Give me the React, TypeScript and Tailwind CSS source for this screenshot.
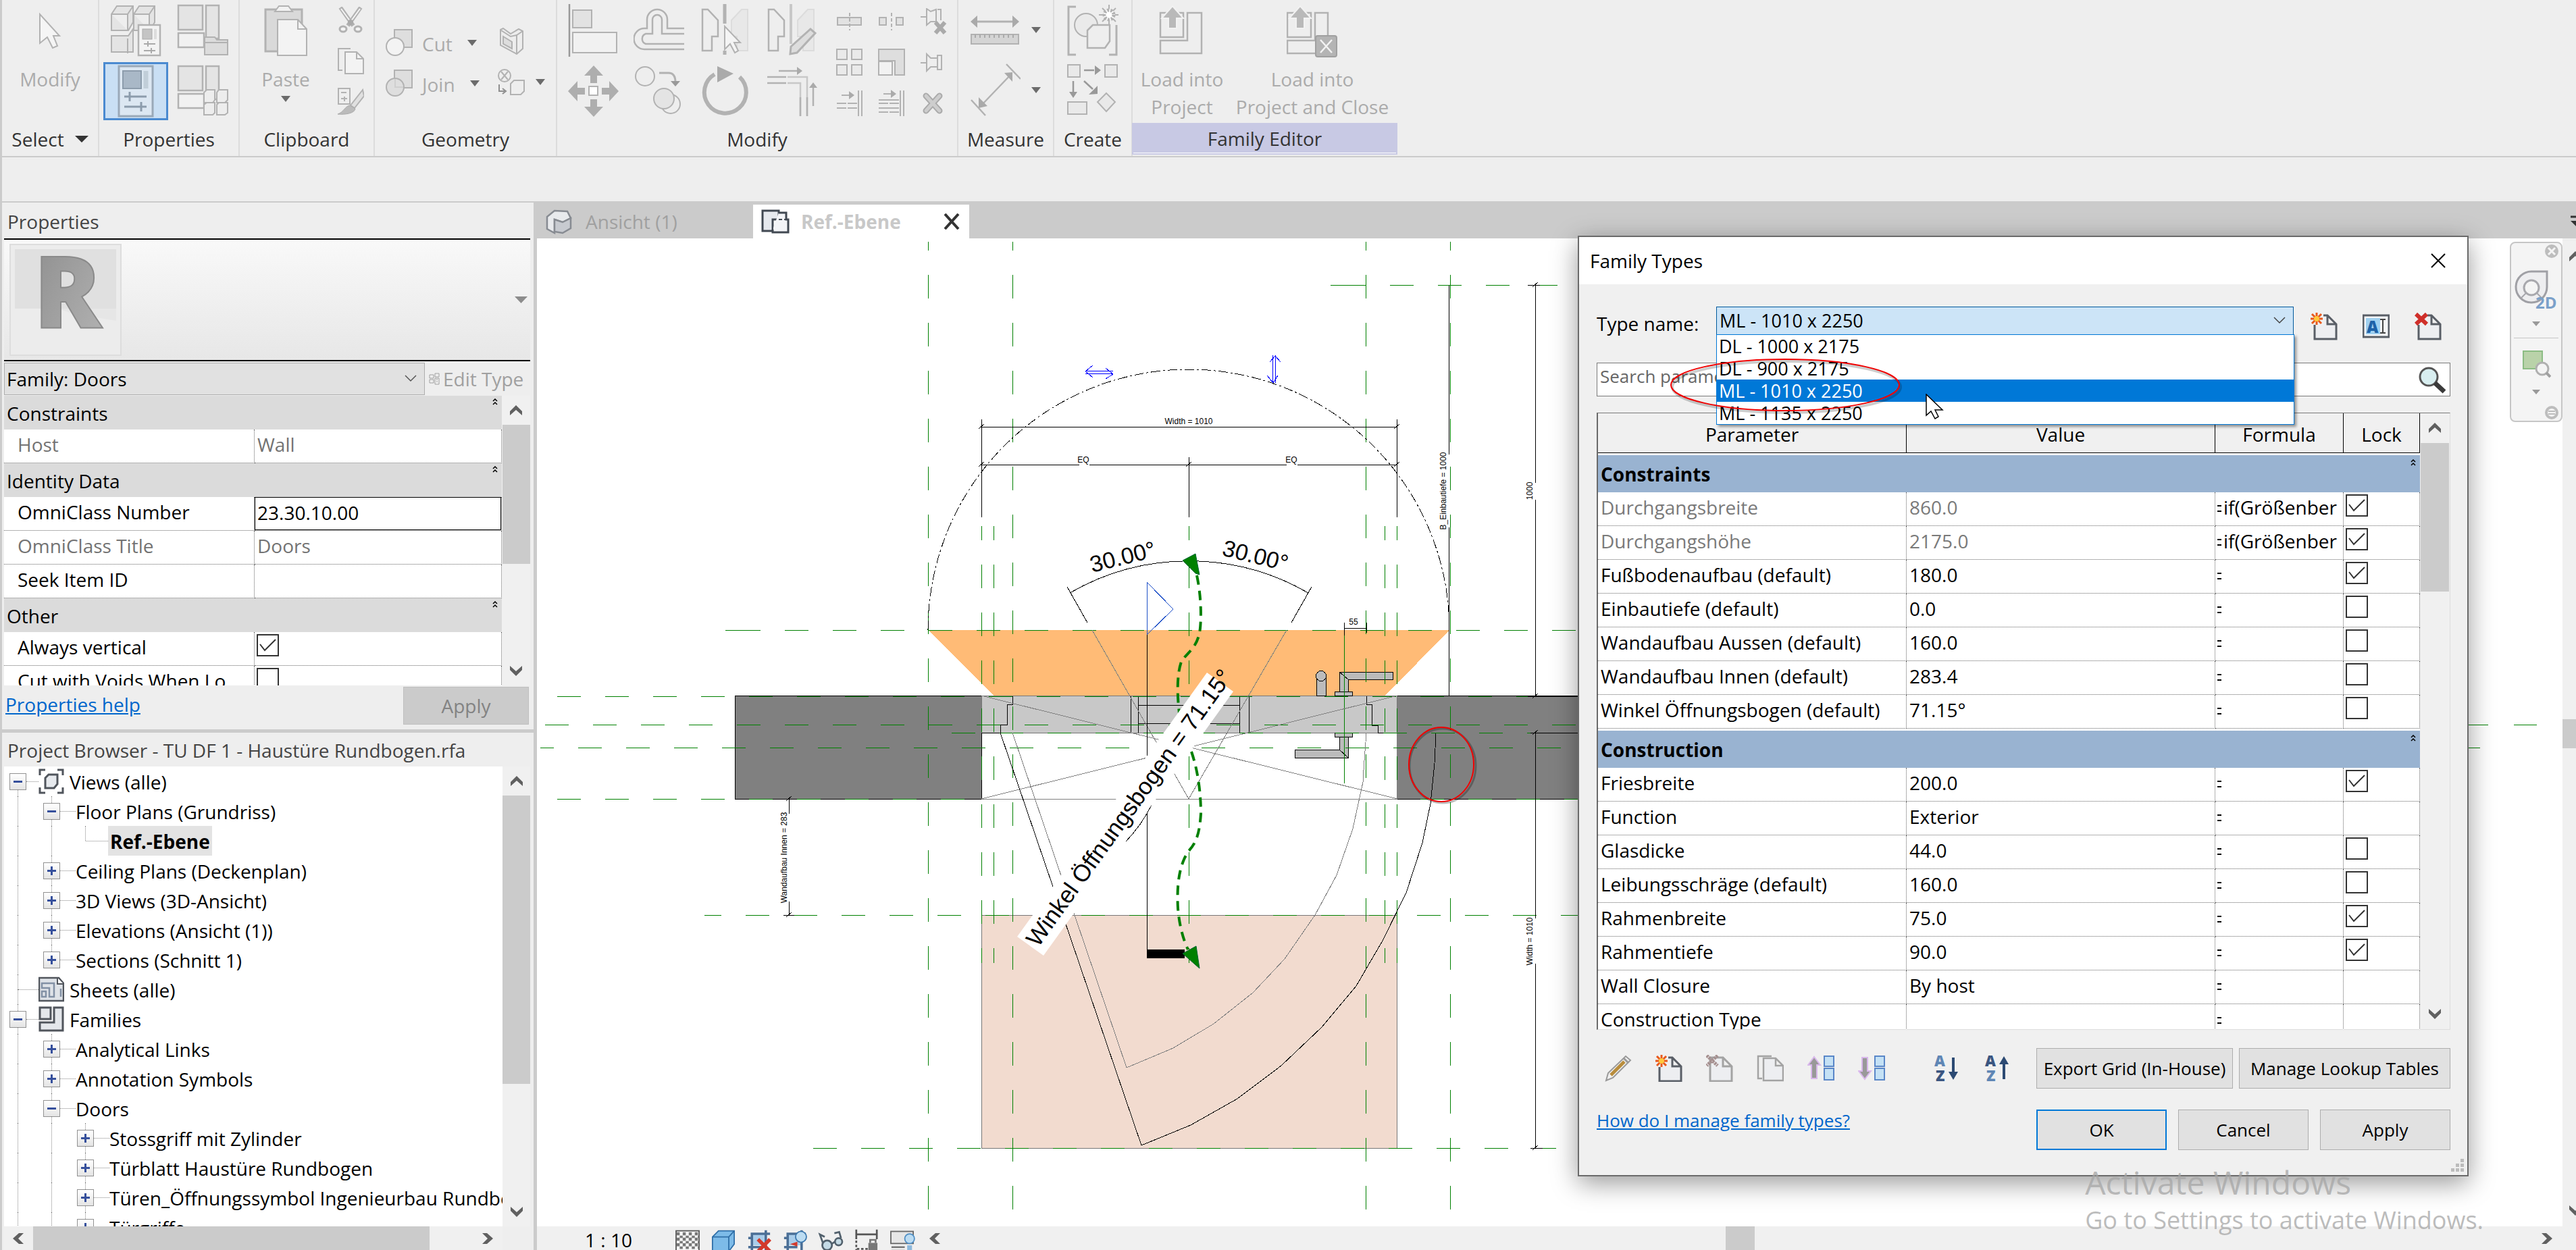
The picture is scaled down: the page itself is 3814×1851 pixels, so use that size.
import type { ReactNode } from 'react';

/* ---------- shared bits ---------- */

const G = '#b2b2b2';
const F = '#e4e4e4';

function Svg({ w, h, children, className = '' }: { w: number; h: number; children: ReactNode; className?: string }) {
  return (
    <svg width={w} height={h} viewBox={`0 0 ${w} ${h}`} className={`block shrink-0 ${className}`} aria-hidden="true">
      {children}
    </svg>
  );
}

function Caret({ color = '#6b6b6b', w = 14, h = 9 }: { color?: string; w?: number; h?: number }) {
  return (
    <Svg w={w} h={h}>
      <path d={`M0 0H${w}L${w / 2} ${h}Z`} fill={color} />
    </Svg>
  );
}

function Arrow({ dir }: { dir: 'up' | 'down' | 'left' | 'right' }) {
  const paths = {
    up: 'M1 16V10L10 1L19 10V16L10 8Z',
    down: 'M1 1V7L10 16L19 7V1L10 9Z',
    left: 'M17 1H10L1 9L10 17H17L9 9Z',
    right: 'M1 1H8L17 9L8 17H1L9 9Z',
  };
  return (
    <Svg w={20} h={18}>
      <path d={paths[dir]} fill="#606060" />
    </Svg>
  );
}

function CheckBox({ checked = false, label }: { checked?: boolean; label: string }) {
  return (
    <span className="grid size-[33px]">
      <input
        type="checkbox"
        defaultChecked={checked}
        aria-label={label}
        className="peer col-start-1 row-start-1 size-[33px] appearance-none border-2 border-[#333] bg-white"
      />
      <svg
        viewBox="0 0 33 33"
        className="pointer-events-none invisible col-start-1 row-start-1 size-[33px] peer-checked:visible"
        aria-hidden="true"
      >
        <path d="M5 15L12 24L28 8" fill="none" stroke="#333" strokeWidth="2" />
      </svg>
    </span>
  );
}

function Collapse() {
  return (
    <Svg w={8} h={10}>
      <path d="M1 4L4 1L7 4M1 9L4 6L7 9" fill="none" stroke="#000" strokeWidth="1.5" />
    </Svg>
  );
}

/* ---------- ribbon icons (76 x 80 and 40 x 40) ---------- */

function Cubes() {
  return (
    <g stroke={G} strokeWidth="2" fill={F}>
      <path d="M2 16L10 4H34V28L27 40H2Z" />
      <path d="M2 16H26V40M26 16L34 4" fill="#eee" />
      <path d="M35 16L43 4H66V28L59 40H35Z" />
      <path d="M35 16H58V40M58 16L66 4" fill="#eee" />
      <path d="M2 48H27L34 38V72H2Z" />
      <path d="M26 52V74" />
    </g>
  );
}

function Cabinet() {
  return (
    <g stroke={G} strokeWidth="2.5" fill={F}>
      <rect x="2" y="3" width="36" height="36" />
      <path d="M43 3H62V52H43Z" />
      <path d="M2 44H40V65H2Z" fill="#f1f1f1" />
    </g>
  );
}

function PropertiesIcon() {
  return (
    <Svg w={76} h={80}>
      <Cubes />
      <rect x="42" y="32" width="32" height="45" fill="#f3f3f3" stroke={G} strokeWidth="2.5" />
      <rect x="48" y="38" width="14" height="15" fill="#c4c4c4" stroke="#aaa" />
      <path d="M67 38V53" stroke="#ddd" strokeWidth="4" />
      <path d="M50 60H67M56 56V64M50 70H67M61 66V74" stroke="#aaa" strokeWidth="2" />
    </Svg>
  );
}

function FamilyCategoryIcon() {
  return (
    <Svg w={76} h={80}>
      <Cabinet />
      <path d="M41 76V50H56L59 54H75V76Z" fill="#dcdcdc" stroke={G} strokeWidth="2" />
      <path d="M41 58H75" stroke={G} strokeWidth="2" />
    </Svg>
  );
}

function TypePaletteIcon() {
  return (
    <Svg w={76} h={80}>
      <rect x="13" y="3" width="50" height="74" fill="#dce7f2" stroke="#9aa9b8" strokeWidth="3" />
      <rect x="19" y="10" width="27" height="26" fill="#a9b8c7" stroke="#8c9cac" strokeWidth="2" />
      <path d="M53 10V36" stroke="#c1ced9" strokeWidth="7" />
      <path d="M21 48H54M29 41V55M21 63H54M46 56V70" stroke="#8c9cac" strokeWidth="3" />
    </Svg>
  );
}

function FamilyTypesIcon() {
  return (
    <Svg w={76} h={80}>
      <Cabinet />
      <g fill="#ededed" stroke={G} strokeWidth="2">
        <path d="M40 42L44 38H56V53L53 57H40Z" />
        <path d="M59 42L62 38H75V53L71 57H59Z" />
        <path d="M40 60L44 57H56V72L53 75H40Z" />
        <path d="M59 60L62 57H75V72L71 75H59Z" />
      </g>
    </Svg>
  );
}

function PasteIcon() {
  return (
    <Svg w={76} h={80}>
      <rect x="8" y="9" width="54" height="62" fill="#d9d9d9" stroke={G} strokeWidth="3" />
      <path d="M22 12L28 4H42L48 12Z" fill="#f2f2f2" stroke={G} strokeWidth="2" />
      <path d="M26 24H56L69 38V77H26Z" fill="#f3f3f3" stroke={G} strokeWidth="2" />
      <path d="M56 24V38H69" fill="none" stroke={G} strokeWidth="2" />
    </Svg>
  );
}

function ScissorsIcon() {
  return (
    <Svg w={40} h={40}>
      <path d="M5 1L24 28M35 1L16 28" stroke={G} strokeWidth="6" />
      <path d="M6 3L22 25M34 3L18 25" stroke="#f4f4f4" strokeWidth="2" />
      <circle cx="20" cy="23" r="4" fill="#aaa" />
      <ellipse cx="9" cy="33" rx="5" ry="4" fill="#f4f4f4" stroke={G} strokeWidth="3" />
      <ellipse cx="31" cy="33" rx="5" ry="4" fill="#f4f4f4" stroke={G} strokeWidth="3" />
    </Svg>
  );
}

function CopyIcon() {
  return (
    <Svg w={40} h={40}>
      <path d="M8 34H2V2H20" fill="none" stroke={G} strokeWidth="2" />
      <path d="M12 7H29L39 17V39H12Z" fill="#f3f3f3" stroke={G} strokeWidth="2" />
      <path d="M29 7V17H39" fill="none" stroke={G} strokeWidth="2" />
    </Svg>
  );
}

function BrushIcon() {
  return (
    <Svg w={40} h={40}>
      <rect x="2" y="1" width="17" height="23" fill="#eee" stroke={G} strokeWidth="2" />
      <path d="M6 7H14M6 16H15M11 13V20" stroke={G} strokeWidth="2" />
      <path d="M38 3L20 26L26 30L40 12Z" fill="#e0e0e0" stroke={G} strokeWidth="2" />
      <path d="M19 26L27 31C26 38 12 40 1 39C10 36 12 27 19 26Z" fill="#bbb" stroke="#aaa" />
    </Svg>
  );
}

function CutGeometryIcon() {
  return (
    <Svg w={40} h={40}>
      <rect x="13" y="1" width="26" height="26" fill="#dedede" stroke={G} strokeWidth="2" />
      <circle cx="14" cy="26" r="13" fill="#f3f3f3" stroke={G} strokeWidth="2" />
    </Svg>
  );
}

function JoinGeometryIcon() {
  return (
    <Svg w={40} h={40}>
      <rect x="13" y="1" width="26" height="26" fill="#dedede" stroke={G} strokeWidth="2" />
      <circle cx="14" cy="26" r="13" fill="#dedede" stroke={G} strokeWidth="2" />
      <path d="M14 14V26H26" fill="none" stroke="#cfcfcf" strokeWidth="2" />
    </Svg>
  );
}

function WallOpeningIcon() {
  return (
    <Svg w={40} h={40}>
      <path d="M4 3L8 1L19 9L31 2L37 5V31L28 39L4 26Z" fill="#ededed" stroke={G} strokeWidth="2" />
      <path d="M28 11V39M5 4L19 13L28 11L37 5" fill="none" stroke={G} strokeWidth="2" />
      <path d="M8 13L21 21V31L8 24Z" fill="#ddd" stroke={G} strokeWidth="2" />
    </Svg>
  );
}

function SplitFaceIcon() {
  return (
    <Svg w={40} h={40}>
      <circle cx="10" cy="11" r="9" fill="#eee" stroke={G} strokeWidth="2" />
      <path d="M5 5L15 17M15 5L5 17" stroke={G} strokeWidth="2" />
      <path d="M2 24V34H10M7 30L12 34L7 38" fill="none" stroke="#8f8f8f" strokeWidth="2" />
      <path d="M19 23L24 18H39V34L34 39H19Z" fill="#eee" stroke={G} strokeWidth="2" />
    </Svg>
  );
}

const modifyIcons: { name: string; icon: ReactNode }[] = [
  {
    name: 'Align',
    icon: (
      <>
        <path d="M3 1V79" stroke="#999" strokeWidth="2.5" />
        <rect x="8" y="10" width="28" height="26" fill="#e2e2e2" stroke={G} strokeWidth="2" />
        <rect x="8" y="43" width="65" height="30" fill="#f1f1f1" stroke={G} strokeWidth="2" />
      </>
    ),
  },
  {
    name: 'Offset',
    icon: (
      <g fill="none" stroke={G} strokeWidth="2.5">
        <path d="M75 37H50V24A13 13 0 0 0 20 24V37H16A15 15 0 0 0 16 68H75" />
        <path d="M75 45H42V24A6 6 0 0 0 28 24V45H18A8 8 0 0 0 18 60H75" />
      </g>
    ),
  },
  {
    name: 'Mirror - Pick Axis',
    icon: (
      <>
        <path d="M4 9H12L27 25V49H18V70H4Z" fill="#eee" stroke={G} strokeWidth="2.5" />
        <path d="M71 9H62L47 25V49H55V70H71Z" fill="#e8e8e8" stroke="#dcdcdc" strokeWidth="2" />
        <path d="M37 1V30M37 70V76" stroke={G} strokeWidth="5" />
        <path d="M37 34V68L45 60L52 73L57 70L51 58H60Z" fill="#f4f4f4" stroke={G} strokeWidth="2" />
      </>
    ),
  },
  {
    name: 'Mirror - Draw Axis',
    icon: (
      <>
        <path d="M4 9H12L27 25V49H18V70H4Z" fill="#eee" stroke={G} strokeWidth="2.5" />
        <path d="M71 9H62L47 25V49H55V70H71Z" fill="#e8e8e8" stroke="#dcdcdc" strokeWidth="2" />
        <path d="M37 1V60" stroke="#c8c8c8" strokeWidth="4" />
        <path d="M37 64L66 38L73 44L46 73L36 75Z" fill="#ddd" stroke={G} strokeWidth="3" />
      </>
    ),
  },
  {
    name: 'Move',
    icon: (
      <g fill="#aeaeae">
        <path d="M39 1L53 16H44V27H34V16H25Z" />
        <path d="M39 77L53 62H44V51H34V62H25Z" />
        <path d="M1 39L15 24V34H26V44H15V54Z" />
        <path d="M76 39L62 24V34H51V44H62V54Z" />
        <rect x="32" y="32" width="13" height="13" fill="#fff" stroke={G} strokeWidth="2" />
      </g>
    ),
  },
  {
    name: 'Copy',
    icon: (
      <g fill="#eee" stroke={G} strokeWidth="2">
        <circle cx="17" cy="17" r="14" />
        <circle cx="55" cy="58" r="14" />
        <circle cx="45" cy="50" r="15" fill="#e4e4e4" />
        <path d="M38 12H52C60 12 62 18 62 26" fill="none" strokeWidth="3" />
        <path d="M55 24H69L62 32Z" fill="#999" stroke="none" />
      </g>
    ),
  },
  {
    name: 'Rotate',
    icon: (
      <>
        <path d="M59 18A31 31 0 1 1 22 14" fill="none" stroke={G} strokeWidth="6" />
        <path d="M26 2L50 13L26 26Z" fill="#aaa" />
      </>
    ),
  },
  {
    name: 'Trim/Extend to Corner',
    icon: (
      <g fill="none" stroke={G} strokeWidth="2.5">
        <path d="M2 18H30M2 27H30" />
        <path d="M32 18H61V76M32 27H51V76" fill="none" stroke="#c8c8c8" />
        <path d="M51 48V76M61 48V76" />
        <path d="M19 9H48M70 61V32" />
        <path d="M46 3L54 9L46 15ZM64 34L70 26L76 34Z" fill="#aaa" stroke="none" />
      </g>
    ),
  },
];

const smallIcons: { name: string; icon: ReactNode }[] = [
  {
    name: 'Split Element',
    icon: (
      <>
        <rect x="2" y="14" width="35" height="11" fill="#e2e2e2" stroke={G} strokeWidth="2" />
        <path d="M20 7V33" stroke={G} strokeWidth="2" strokeDasharray="5 3" />
      </>
    ),
  },
  {
    name: 'Split with Gap',
    icon: (
      <>
        <rect x="2" y="14" width="10" height="11" fill="#e2e2e2" stroke={G} strokeWidth="2" />
        <rect x="27" y="14" width="10" height="11" fill="#e2e2e2" stroke={G} strokeWidth="2" />
        <path d="M20 7V33" stroke={G} strokeWidth="2" strokeDasharray="5 3" />
      </>
    ),
  },
  {
    name: 'Unpin',
    icon: (
      <>
        <path d="M1 13H9M10 1V25L16 20H24V2L16 5Z" fill="#eee" stroke={G} strokeWidth="2" />
        <path d="M26 2H31V18" fill="none" stroke={G} strokeWidth="2" />
        <path d="M23 21L37 37M37 21L23 37" stroke="#aaa" strokeWidth="6" />
      </>
    ),
  },
  {
    name: 'Array',
    icon: (
      <g fill="#eaeaea" stroke={G} strokeWidth="2">
        <rect x="1" y="1" width="15" height="15" />
        <rect x="23" y="1" width="15" height="15" />
        <rect x="1" y="24" width="15" height="15" />
        <rect x="23" y="24" width="15" height="15" />
      </g>
    ),
  },
  {
    name: 'Scale',
    icon: (
      <g stroke={G} strokeWidth="2">
        <path d="M1 1H39V39H25V18H1Z" fill="#dedede" />
        <rect x="1" y="19" width="20" height="20" fill="#f2f2f2" />
      </g>
    ),
  },
  {
    name: 'Pin',
    icon: (
      <path
        d="M1 21H10M10 8V33L16 27H26V31H32V10H26V14H16ZM26 14V27"
        fill="#eee"
        stroke={G}
        strokeWidth="2"
      />
    ),
  },
  {
    name: 'Trim Single',
    icon: (
      <g fill="none" stroke={G} strokeWidth="2">
        <path d="M1 20H15M1 27H15M17 20H31M17 27H31M33 1V39M38 1V39" />
        <path d="M8 8H22" />
        <path d="M19 2L27 8L19 14Z" fill="#aaa" stroke="none" />
      </g>
    ),
  },
  {
    name: 'Trim Multiple',
    icon: (
      <g fill="none" stroke={G} strokeWidth="2">
        <path d="M1 15H31M1 20H15M1 27H31M1 33H15M17 20H31M17 33H31M33 1V39M38 1V39" />
        <path d="M8 6H22" />
        <path d="M19 0L27 6L19 12Z" fill="#aaa" stroke="none" />
      </g>
    ),
  },
  {
    name: 'Delete',
    icon: (
      <>
        <path d="M9 9L29 31M29 9L9 31" stroke="#aaa" strokeWidth="9" strokeLinecap="round" />
        <path d="M9 9L29 31M29 9L9 31" stroke="#cdcdcd" strokeWidth="5" strokeLinecap="round" />
      </>
    ),
  },
];

/* ---------- ribbon ---------- */

function Group({ label, width, children, last }: { label: ReactNode; width: string; children: ReactNode; last?: boolean }) {
  return (
    <section className={`flex shrink-0 flex-col ${width} ${last ? '' : 'border-r-2 border-[#dcdcdc]'}`}>
      <div className="flex h-[183px]">{children}</div>
      <div
        className={`flex h-[45px] items-center justify-center gap-4 text-[#333] ${
          last ? 'border-b-2 border-white bg-[#c8c9e4] outline-2 outline-[#c8c9e4] -outline-offset-1' : ''
        }`}
      >
        {label}
      </div>
    </section>
  );
}

function BigButton({ icon, children, className = '' }: { icon: ReactNode; children: ReactNode; className?: string }) {
  return (
    <button className={`flex flex-col items-center gap-3 pt-[5px] text-[#ababab] leading-[41px] ${className}`}>
      {icon}
      <span className="text-center whitespace-nowrap">{children}</span>
    </button>
  );
}

function Ribbon() {
  return (
    <header className="flex h-[233px] border-b-2 border-[#cbcbcb] bg-[#eee]">
      <Group width="w-[144px]" label={<>Select <Caret color="#333" w={20} h={10} /></>}>
        <BigButton
          className="w-full"
          icon={
            <Svg w={76} h={80}>
              <path d="M23 16V59L34 50L42 66L49 63L43 48H52Z" fill="#f5f5f5" stroke={G} strokeWidth="2" />
            </Svg>
          }
        >
          Modify
        </BigButton>
      </Group>

      <Group width="w-[208px]" label="Properties">
        <div className="grid grid-cols-2 grid-rows-2 gap-1 p-1.5 pt-0.5 pb-[5px]">
          <button className="grid w-24 place-items-center" aria-label="Properties"><PropertiesIcon /></button>
          <button className="grid w-24 place-items-center" aria-label="Family Category"><FamilyCategoryIcon /></button>
          <button className="grid w-24 place-items-center border-3 border-[#4a8ad0] bg-[#c9dff4]" aria-label="Type Properties">
            <TypePaletteIcon />
          </button>
          <button className="grid w-24 place-items-center" aria-label="Family Types"><FamilyTypesIcon /></button>
        </div>
      </Group>

      <Group width="w-[200px]" label="Clipboard">
        <div className="flex flex-col items-center gap-1 pl-[30px]">
          <BigButton icon={<PasteIcon />}>Paste</BigButton>
          <Caret />
        </div>
        <div className="flex flex-col gap-5 pt-2.5 pl-[38px]">
          <button aria-label="Cut to clipboard"><ScissorsIcon /></button>
          <button aria-label="Copy to clipboard"><CopyIcon /></button>
          <button aria-label="Match type"><BrushIcon /></button>
        </div>
      </Group>

      <Group width="w-[270px]" label="Geometry">
        <div className="flex w-[182px] flex-col pt-[33px] pl-[16px] text-[#ababab]">
          <button className="flex h-[60px] items-center gap-3.5">
            <CutGeometryIcon />
            <span className="pt-1">Cut</span>
            <span className="pl-2"><Caret /></span>
          </button>
          <button className="flex h-[60px] items-center gap-3.5">
            <JoinGeometryIcon />
            <span className="pt-1">Join</span>
            <span className="pl-2"><Caret /></span>
          </button>
        </div>
        <div className="flex flex-col pt-[31px]">
          <button className="flex h-[60px] items-center" aria-label="Wall Opening"><WallOpeningIcon /></button>
          <button className="flex h-[60px] items-center gap-4" aria-label="Split Face"><SplitFaceIcon /><Caret /></button>
        </div>
      </Group>

      <Group width="w-[594px]" label="Modify">
        <div className="grid grid-cols-4 pl-1">
          {modifyIcons.map((m) => (
            <button key={m.name} aria-label={m.name} className="grid h-[89px] w-[98px] place-items-center">
              <Svg w={76} h={80}>{m.icon}</Svg>
            </button>
          ))}
        </div>
        <div className="grid grid-cols-3 pt-0.5 pl-1.5">
          {smallIcons.map((m) => (
            <button key={m.name} aria-label={m.name} className="grid h-[60px] w-[62px] place-items-center">
              <Svg w={40} h={40}>{m.icon}</Svg>
            </button>
          ))}
        </div>
      </Group>

      <Group width="w-[142px]" label="Measure">
        <div className="flex flex-col pl-4">
          <button className="flex h-[89px] items-center gap-4" aria-label="Measure">
            <Svg w={76} h={80}>
              <path d="M12 27H64" stroke={G} strokeWidth="3" />
              <path d="M2 27L12 18V36ZM74 27L64 18V36Z" fill="#aaa" />
              <rect x="3" y="46" width="70" height="14" fill="#d4d4d4" stroke={G} strokeWidth="2" />
              <path d="M9 46V51M16 46V51M23 46V51M30 46V51M37 46V51M44 46V51M51 46V51M58 46V51M65 46V51" stroke="#aaa" strokeWidth="2" />
            </Svg>
            <Caret />
          </button>
          <button className="flex h-[89px] items-center gap-4" aria-label="Dimension">
            <Svg w={76} h={80}>
              <path d="M3 54L24 77M55 1L76 23M18 62L62 16" stroke={G} strokeWidth="2.5" />
              <path d="M14 50L27 63L14 66ZM52 14L64 13V27Z" fill="#aaa" />
            </Svg>
            <Caret />
          </button>
        </div>
      </Group>

      <Group width="w-[116px]" label="Create">
        <div className="flex w-full flex-col items-center">
          <button className="grid h-[89px] place-items-center" aria-label="Component">
            <Svg w={76} h={80}>
              <path d="M13 5H2V76H13M62 76H73V32" fill="none" stroke={G} strokeWidth="3" />
              <circle cx="28" cy="32" r="17" fill="#eaeaea" stroke={G} strokeWidth="2" />
              <path d="M30 40L38 32H63V56L56 66H30Z" fill="#eee" stroke={G} strokeWidth="2.5" />
              <circle cx="62" cy="17" r="7" fill="#fff" stroke={G} strokeWidth="5" strokeDasharray="3 2" />
              <path d="M62 2V8M62 26V32M47 17H53M71 17H76M52 7L56 11M68 23L72 27M72 7L68 11M56 23L52 27" stroke={G} strokeWidth="2" />
            </Svg>
          </button>
          <button className="grid h-[89px] place-items-center" aria-label="Group">
            <Svg w={76} h={80}>
              <g fill="#e9e9e9" stroke={G} strokeWidth="2">
                <rect x="1" y="2" width="18" height="18" />
                <rect x="56" y="2" width="18" height="18" />
                <rect x="1" y="57" width="28" height="18" />
                <path d="M58 44L71 57L58 71L45 57Z" />
              </g>
              <path d="M25 10H40M9 26V44M25 26L38 38" stroke="#999" strokeWidth="2.5" />
              <path d="M41 3L50 10L41 17ZM3 42H15L9 51ZM32 46L45 45V33Z" fill="#999" />
            </Svg>
          </button>
        </div>
      </Group>

      <Group width="w-[391px]" label="Family Editor" last>
        <BigButton
          className="w-[146px]"
          icon={
            <Svg w={76} h={80}>
              <path d="M6 14H40V50H6Z" fill="#eee" stroke={G} strokeWidth="2.5" />
              <path d="M46 14H67V74H6V55H46Z" fill="#eee" stroke={G} strokeWidth="2.5" />
              <path d="M24 4L40 22H30V37H18V22H8Z" fill="#b9b9b9" stroke="#f2f2f2" strokeWidth="2" />
            </Svg>
          }
        >
          Load into<br />Project
        </BigButton>
        <BigButton
          className="w-[240px]"
          icon={
            <Svg w={76} h={80}>
              <path d="M1 14H36V50H1Z" fill="#eee" stroke={G} strokeWidth="2.5" />
              <path d="M42 14H61V74H1V55H42Z" fill="#eee" stroke={G} strokeWidth="2.5" />
              <path d="M20 4L36 22H26V37H14V22H4Z" fill="#b9b9b9" stroke="#f2f2f2" strokeWidth="2" />
              <rect x="43" y="48" width="31" height="31" rx="3" fill="#b4b4b4" stroke="#a0a0a0" strokeWidth="2" />
              <path d="M50 54L67 73M67 54L50 73" stroke="#f3f3f3" strokeWidth="2.5" />
            </Svg>
          }
        >
          Load into<br />Project and Close
        </BigButton>
      </Group>
    </header>
  );
}

/* ---------- properties palette ---------- */

function PropHeader({ children }: { children: ReactNode }) {
  return (
    <tr className="bg-[#dbdbdb]">
      <th colSpan={2} className="h-[50px] p-0 text-left font-normal">
        <div className="flex h-[50px] justify-between pt-1 pl-1 leading-[44px]">
          {children}
          <span className="pr-1.5"><Collapse /></span>
        </div>
      </th>
    </tr>
  );
}

function PropRow({ name, children, muted }: { name: string; children?: ReactNode; muted?: boolean }) {
  return (
    <tr className={`leading-[44px] ${muted ? 'text-[#737373]' : ''}`}>
      <td className="h-[50px] border-r border-b border-dotted border-[#666] p-0 pl-5 align-top whitespace-nowrap">{name}</td>
      <td className="h-[50px] border-r border-b border-dotted border-[#666] p-0 align-top">{children}</td>
    </tr>
  );
}

function PropertiesPalette() {
  return (
    <section className="flex h-[785px] shrink-0 flex-col border-b-[5px] border-[#cbcbcb] bg-[#eee]">
      <h2 className="h-[53px] pt-1.5 pl-2 leading-[44px] text-[#444]">Properties</h2>
      <div className="mx-[3px] mr-[5px] flex h-[182px] items-center justify-between border-y-2 border-black bg-linear-to-b from-[#f9f9f9] to-[#e7e7e7] pr-1 pl-2">
        <div className="grid size-[166px] place-items-center overflow-hidden border-2 border-[#ddd] bg-[#ececec]">
          <svg width="150" height="150" viewBox="0 0 150 150" aria-hidden="true">
            <defs>
              <linearGradient id="r-face" x1="0" y1="0" x2="1" y2="1">
                <stop offset="0" stopColor="#8c8c8c" />
                <stop offset="1" stopColor="#b4b4b4" />
              </linearGradient>
            </defs>
            <rect width="150" height="88" fill="#e0e0e0" />
            <path d="M64 88H150V106L84 95Z" fill="#e6e6e6" />
            <text
              x="28"
              y="116"
              fontFamily="'Open Sans', sans-serif"
              fontWeight="800"
              fontSize="148"
              fill="url(#r-face)"
              stroke="#8a8a8a"
              strokeWidth="2"
            >
              R
            </text>
          </svg>
        </div>
        <Caret color="#8c8c8c" w={19} h={10} />
      </div>
      <div className="mr-[5px] ml-[3px] flex h-[51px] items-center">
        <div className="grid h-[48px] w-[623px] items-center">
          <select
            aria-label="Family"
            className="col-start-1 row-start-1 h-[48px] appearance-none border border-[#adadad] bg-[#e1e1e1] pl-[3px]"
          >
            <option>Family: Doors</option>
          </select>
          <svg width="18" height="12" className="pointer-events-none col-start-1 row-start-1 mr-3 justify-self-end" aria-hidden="true">
            <path d="M1 1L9 9L17 1" fill="none" stroke="#555" strokeWidth="1.5" />
          </svg>
        </div>
        <button className="flex flex-1 items-center gap-1 pl-1.5 whitespace-nowrap text-[#a0a0a0]">
          <svg width="17" height="18" viewBox="0 0 17 18" aria-hidden="true">
            <path d="M1 3H7V8H1ZM9 1H15V6H9ZM1 10H7V15H1ZM9 8H15V17H9ZM11 10H13M11 13H13" fill="none" stroke="#a0a0a0" />
          </svg>
          Edit Type
        </button>
      </div>
      <div className="mr-[5px] ml-[3px] flex min-h-0 flex-1">
        <div className="flex-1 overflow-hidden bg-white">
          <table className="w-full table-fixed border-separate border-spacing-0">
            <colgroup>
              <col className="w-[371px]" />
              <col />
            </colgroup>
            <tbody>
              <PropHeader>Constraints</PropHeader>
              <PropRow name="Host" muted><span className="pl-1">Wall</span></PropRow>
              <PropHeader>Identity Data</PropHeader>
              <PropRow name="OmniClass Number">
                <input
                  aria-label="OmniClass Number"
                  defaultValue="23.30.10.00"
                  className="block h-[49px] w-full border border-black pb-1 pl-[3px]"
                />
              </PropRow>
              <PropRow name="OmniClass Title" muted><span className="pl-1">Doors</span></PropRow>
              <PropRow name="Seek Item ID" />
              <PropHeader>Other</PropHeader>
              <PropRow name="Always vertical"><div className="pt-[3px] pl-[3px]"><CheckBox checked label="Always vertical" /></div></PropRow>
              <PropRow name="Cut with Voids When Lo"><div className="pt-[3px] pl-[3px]"><CheckBox label="Cut with Voids When Loaded" /></div></PropRow>
            </tbody>
          </table>
        </div>
        <div className="flex w-[42px] flex-col items-center justify-between bg-[#f0f0f0]">
          <button className="grid h-[43px] place-items-center" aria-label="Scroll up"><Arrow dir="up" /></button>
          <div className="min-h-0 w-[41px] flex-1"><div className="h-[206px] bg-[#cbcbcb]" /></div>
          <button className="grid h-[43px] place-items-center" aria-label="Scroll down"><Arrow dir="down" /></button>
        </div>
      </div>
      <div className="flex h-[65px] items-start justify-between pt-0.5 pr-[7px] pl-[5px]">
        <a href="#help" className="leading-[52px] text-[#0066cc] underline">Properties help</a>
        <button className="h-[56px] w-[186px] border border-[#bfbfbf] bg-[#cbcbcb] text-[#838383]">Apply</button>
      </div>
    </section>
  );
}

/* ---------- project browser ---------- */

type Node = {
  label: string;
  guides: boolean[];
  toggle?: '+' | '-';
  icon?: ReactNode;
  up?: boolean;
  down?: boolean;
  current?: boolean;
};

const viewsIcon = (
  <Svg w={38} h={38}>
    <path d="M2 10V2H10M28 2H36V10M36 28V36H28M10 36H2V28" fill="none" stroke="#50555c" strokeWidth="3" />
    <path d="M10 14L15 9H28V23L23 29H10Z" fill="#e7eaee" stroke="#50555c" strokeWidth="3" />
  </Svg>
);
const sheetsIcon = (
  <Svg w={38} h={38}>
    <path d="M1 2H30L37 10V36H1Z" fill="#dfe3e8" stroke="#50555c" strokeWidth="2.5" />
    <path d="M5 10H23V30H16V17H5ZM5 22H11V30H5ZM33 18V30" fill="none" stroke="#8291a5" strokeWidth="2.5" />
    <path d="M28 2V11H37" fill="#fff" stroke="#50555c" strokeWidth="2" />
  </Svg>
);
const familiesIcon = (
  <Svg w={38} h={38}>
    <rect x="2" y="2" width="16" height="17" fill="#e4e7eb" stroke="#50555c" strokeWidth="3" />
    <path d="M23 2H36V36H2V24H23Z" fill="#e4e7eb" stroke="#50555c" strokeWidth="3" />
  </Svg>
);

const tree: Node[] = [
  { label: 'Views (alle)', guides: [], toggle: '-', icon: viewsIcon, down: true },
  { label: 'Floor Plans (Grundriss)', guides: [true], toggle: '-', up: true, down: true },
  { label: 'Ref.-Ebene', guides: [true, true], up: true, current: true },
  { label: 'Ceiling Plans (Deckenplan)', guides: [true], toggle: '+', up: true, down: true },
  { label: '3D Views (3D-Ansicht)', guides: [true], toggle: '+', up: true, down: true },
  { label: 'Elevations (Ansicht (1))', guides: [true], toggle: '+', up: true, down: true },
  { label: 'Sections (Schnitt 1)', guides: [true], toggle: '+', up: true },
  { label: 'Sheets (alle)', guides: [], icon: sheetsIcon, up: true, down: true },
  { label: 'Families', guides: [], toggle: '-', icon: familiesIcon, up: true, down: true },
  { label: 'Analytical Links', guides: [true], toggle: '+', up: true, down: true },
  { label: 'Annotation Symbols', guides: [true], toggle: '+', up: true, down: true },
  { label: 'Doors', guides: [true], toggle: '-', up: true, down: true },
  { label: 'Stossgriff mit Zylinder', guides: [true, true], toggle: '+', up: true, down: true },
  { label: 'Türblatt Haustüre Rundbogen', guides: [true, true], toggle: '+', up: true, down: true },
  { label: 'Türen_Öffnungssymbol Ingenieurbau Rundbogen', guides: [true, true], toggle: '+', up: true, down: true },
  { label: 'Türgriffe', guides: [true, true], toggle: '+', up: true, down: true },
];

function TreeRow({ node }: { node: Node }) {
  return (
    <li className="flex h-[44px] items-stretch pl-2 whitespace-nowrap">
      {node.guides.map((_, i) => (
        <span key={i} className="w-[50px] shrink-0 pl-3">
          <span className="block h-full border-l border-dotted border-[#888]" />
        </span>
      ))}
      <span className={`flex shrink-0 items-center ${node.icon ? 'w-[43px]' : 'w-[48px]'}`}>
        <span className="flex h-full w-[25px] shrink-0 flex-col">
          <span className={`ml-3 flex-1 border-l border-dotted ${node.up ? 'border-[#888]' : 'border-transparent'}`} />
          {node.toggle && (
            <button
              aria-label={node.toggle === '+' ? 'Expand' : 'Collapse'}
              className="grid size-[25px] place-items-center border border-[#919191] bg-linear-to-b from-white to-[#e4e4e4]"
            >
              <svg width="13" height="13" aria-hidden="true">
                <path d={node.toggle === '+' ? 'M0 6.5H13M6.5 0V13' : 'M0 6.5H13'} stroke="#36509c" strokeWidth="3" />
              </svg>
            </button>
          )}
          <span className={`ml-3 flex-1 border-l border-dotted ${node.down ? 'border-[#888]' : 'border-transparent'}`} />
        </span>
        <span className={`flex-1 border-t border-dotted border-[#888] ${node.toggle ? '' : '-ml-3'}`} />
      </span>
      {node.icon && <span className="mr-2 flex items-center">{node.icon}</span>}
      <span className={node.current ? '-ml-0.5 bg-[#e3e3e3] px-[3px] leading-[46px] font-bold' : 'leading-[46px]'}>{node.label}</span>
    </li>
  );
}

function ProjectBrowser() {
  return (
    <section className="flex min-h-0 flex-1 flex-col bg-[#eee]">
      <h2 className="h-[50px] shrink-0 pl-2 leading-[52px] whitespace-nowrap text-[#444]">
        Project Browser - TU DF 1 - Haustüre Rundbogen.rfa
      </h2>
      <div className="mr-[5px] ml-[3px] flex min-h-0 flex-1">
        <ul className="min-w-0 flex-1 overflow-hidden bg-white">
          {tree.map((n) => (
            <TreeRow key={n.label} node={n} />
          ))}
        </ul>
        <div className="flex w-[41px] flex-col bg-[#f0f0f0]">
          <button className="grid h-[43px] place-items-center" aria-label="Scroll up"><Arrow dir="up" /></button>
          <div className="min-h-0 flex-1"><div className="h-[427px] bg-[#cbcbcb]" /></div>
          <button className="grid h-[43px] place-items-center" aria-label="Scroll down"><Arrow dir="down" /></button>
        </div>
      </div>
      <div className="mr-[46px] ml-[3px] flex h-[35px] shrink-0 justify-between bg-[#f0f0f0]">
        <button className="grid w-[43px] place-items-center" aria-label="Scroll left"><Arrow dir="left" /></button>
        <div className="min-w-0 flex-1"><div className="h-full w-[587px] bg-[#cbcbcb]" /></div>
        <button className="grid w-[43px] place-items-center" aria-label="Scroll right"><Arrow dir="right" /></button>
      </div>
    </section>
  );
}

/* ---------- drawing ---------- */

const longGrids = [1374, 1499, 2022, 2147];
const shortGrids = [1453, 1471, 1760, 2050, 2068];
// [y, x1, x2, x of one dash start]
const rowGrids: [number, number, number, number][] = [
  [422, 1987, 2324, 1987],
  [933, 1091, 2340, 1091],
  [1031, 825, 2340, 825],
  [1073, 807, 2340, 807],
  [1085, 1409, 2340, 1409],
  [1107, 800, 2340, 785],
  [1183, 803, 2340, 825],
  [1355, 1043, 2340, 1033],
  [1700, 1204, 2306, 1204],
];

function Tick({ x, y }: { x: number; y: number }) {
  return <path d={`M${x - 4} ${y + 3}L${x + 4} ${y - 4}`} stroke="#000" />;
}

function Drawing() {
  return (
    <svg
      className="absolute inset-0 h-full w-full"
      viewBox="795 353 2999 1463"
      preserveAspectRatio="xMinYMin slice"
      role="img"
      aria-label="Ref.-Ebene floor plan"
    >
      <g shapeRendering="crispEdges" fill="none" strokeWidth="1">
        {/* fills */}
        <path d="M1374 933H2146L2051 1030H1471Z" fill="#ffbb76" />
        <rect x="1088" y="1030" width="365" height="153" fill="#808080" stroke="#000" />
        <rect x="2068" y="1030" width="272" height="153" fill="#808080" />
        <path d="M2068 1030H2340M2068 1183H2340" stroke="#000" />
        <rect x="1453" y="1030" width="615" height="55" fill="#c8c8c8" stroke="#777" />
        <rect x="1453" y="1355" width="615" height="345" fill="#f2dbcf" stroke="#777" />

        {/* frame and glazing */}
        <path d="M1499 1031V1043H1491V1073H1481V1085H1453M2023 1031V1043H2031V1074H2040V1085H2051" stroke="#000" />
        <path d="M1674 1031V1085M1685 1031V1085M1835 1031V1085M1849 1031V1085M1685 1044H1835M1685 1071H1835" stroke="#000" />

        {/* handles */}
        <g fill="#bbb" stroke="#000">
          <rect x="1949" y="1001" width="14" height="29" />
          <circle cx="1956" cy="1001" r="7.5" />
          <path d="M1983 1024V995H2062V1006H1996V1024ZM1983 995L1996 1006" />
          <rect x="1976" y="1024" width="26" height="6" />
          <rect x="1976" y="1085" width="26" height="6" />
          <path d="M1983 1091V1110H1917V1122H1996V1091ZM1983 1110L1996 1122" />
        </g>

        {/* reference planes */}
        <g stroke="#008000" strokeDasharray="35 36">
          {longGrids.map((x) => (
            <path key={x} d={`M${x} 358V1792`} strokeDashoffset="22" />
          ))}
          {shortGrids.map((x) => (
            <path key={x} d={`M${x} 779V1426`} strokeDashoffset="14" />
          ))}
          {rowGrids.map(([y, x1, x2, start]) => (
            <path key={y} d={`M${x1} ${y}H${x2}`} strokeDashoffset={x1 - start} />
          ))}
          <path d="M1990 941V1160M1074 933H1091M1970 422H1987M3650 1073H3684M3722 1073H3756M3650 1107H3672" strokeDasharray="none" />
        </g>

        {/* hidden lines */}
        <path
          d="M1453 1030L2069 1183M1453 1183L2069 1030M1617 933L1760 1183L1905 933M1499 1085L1668 1581M1453 1183H2069"
          stroke="#808080"
        />
        <path
          d="M2023 1085L2019 1140L2018 1158L2003 1227L1979 1296L1947 1355L1902 1420L1855 1470L1797 1516L1737 1552L1668 1581"
          stroke="#808080"
        />

        {/* door swing */}
        <path
          d="M1481 1085L1690 1696L1763 1666L1832 1627L1897 1578L1957 1521L2008 1460L2047 1393L2082 1322L2106 1248L2118 1190L2124 1130L2126 1086"
          stroke="#000"
        />
        <path d="M1667 1246Q1690 1222 1705 1192" stroke="#000" />
        <path d="M1374 933A386 386 0 0 1 2146 933" stroke="#000" strokeDasharray="14 4 3 4" />

        {/* dimensions */}
        <g stroke="#000">
          <path d="M1453 632H2068M1453 688H1598M1613 688H1905M1921 688H2068M1453 621V766M1760 677V766M2068 621V766" />
          <path d="M2145 423V673M2145 781V1030M2273 423V715M2273 740V1031M2262 422H2280M2262 1031H2340" />
          <path d="M2273 1085V1360M2273 1427V1700M2266 1085H2340M2266 1700H2284" />
          <path d="M1168 1183V1205M1168 1335V1355M1160 1355H1176" />
          <path d="M1584 878A353 353 0 0 1 1937 878M1580 869L1610 922M1942 869L1912 922" />
          <path d="M1990 930H2023M1990 922V941M2023 922V937" />
          <path d="M1698 940V1119M1698 1205V1406" />
        </g>
        <Tick x={1453} y={632} />
        <Tick x={1453} y={688} />
        <Tick x={1760} y={688} />
        <Tick x={2068} y={632} />
        <Tick x={2068} y={688} />
        <Tick x={2273} y={422} />
        <Tick x={2273} y={1031} />
        <Tick x={2273} y={1085} />
        <Tick x={2273} y={1700} />
        <Tick x={1168} y={1183} />
        <Tick x={1168} y={1355} />
        <rect x="1698" y="1406" width="56" height="13" fill="#000" />
        <path d="M1698 862L1737 902L1698 940Z" stroke="#1e50c8" />

        {/* flip controls */}
        <path d="M1607 549H1648M1607 553H1648M1618 541L1607 550L1618 559M1637 545L1648 554L1637 561" stroke="#00f" />
        <path d="M1884 526V567M1888 526V567M1880 536L1888 527L1896 536M1876 556L1885 567L1892 556" stroke="#00f" />
      </g>

      {/* section break line */}
      <g fill="none" stroke="#008000" strokeWidth="4" strokeDasharray="14 9">
        <path d="M1772 852C1778 880 1779 910 1777 930C1774 960 1757 966 1749 980C1742 1000 1743 1030 1746 1056" />
        <path d="M1764 1113C1775 1145 1778 1180 1778 1205C1776 1235 1771 1248 1760 1260C1746 1280 1742 1310 1744 1345C1746 1370 1752 1392 1759 1406" />
      </g>
      <path d="M1751 830L1770 820L1776 851L1770 849ZM1751 1412L1771 1401L1776 1434Z" fill="#008000" stroke="#063" />

      {/* annotation */}
      <path d="M1787 996L1826 1024L1545 1415L1506 1387Z" fill="#fff" />
      <g fontFamily="'Liberation Sans', Arial, sans-serif" fill="#000">
        <text fontSize="35" transform="translate(1537 1404) rotate(-54.3)">Winkel Öffnungsbogen = 71.15°</text>
        <text fontSize="34" textAnchor="middle" transform="translate(1665 836) rotate(-14)">30.00°</text>
        <text fontSize="34" textAnchor="middle" transform="translate(1856 834) rotate(14)">30.00°</text>
      </g>
      <g fontFamily="'Liberation Sans Narrow', 'Liberation Sans', Arial, sans-serif" fontSize="12" fill="#000">
        <text x="1760" y="628" textAnchor="middle">Width = 1010</text>
        <text x="1604" y="685" textAnchor="middle">EQ</text>
        <text x="1912" y="685" textAnchor="middle">EQ</text>
        <text x="2004" y="925" textAnchor="middle">55</text>
        <text textAnchor="middle" transform="translate(2141 727) rotate(-90)">B_Einbautiefe = 1000</text>
        <text textAnchor="middle" transform="translate(2269 727) rotate(-90)">1000</text>
        <text textAnchor="middle" transform="translate(1165 1270) rotate(-90)">Wandaufbau Innen = 283</text>
        <text textAnchor="middle" transform="translate(2269 1394) rotate(-90)">Width = 1010</text>
      </g>

      {/* red marker */}
      <ellipse cx="2136" cy="1134" rx="49" ry="55" fill="none" stroke="#0004" strokeWidth="3" />
      <ellipse cx="2134" cy="1132" rx="48" ry="55" fill="none" stroke="#f00000" strokeWidth="2" />
    </svg>
  );
}

function NavBar() {
  return (
    <div className="absolute top-[5px] right-0 flex h-[267px] w-[78px] flex-col items-center justify-between rounded-lg border-2 border-[#c6c6c6] bg-[#f4f4f4] px-1 py-0.5">
      <button aria-label="Close navigation bar" className="self-end">
        <Svg w={20} h={20}>
          <circle cx="10" cy="10" r="10" fill="#bdbdbd" />
          <path d="M5 5L15 15M15 5L5 15" stroke="#f4f4f4" strokeWidth="3" />
        </Svg>
      </button>
      <button aria-label="Steering wheel">
        <Svg w={64} h={60}>
          <path d="M26 3H48V26A23 23 0 1 1 26 3Z" fill="#eeeef0" stroke="#a0a0a5" strokeWidth="3" />
          <circle cx="25" cy="27" r="11" fill="#f4f4f4" stroke="#a8a8ad" strokeWidth="3" />
          <path d="M17 35L10 42M33 35L40 42" stroke="#a8a8ad" strokeWidth="2" />
          <text x="31" y="58" fontFamily="'Open Sans', sans-serif" fontWeight="700" fontSize="24" fill="#7ba0c9">2D</text>
        </Svg>
      </button>
      <Caret color="#999" w={12} h={7} />
      <div className="h-px w-full bg-[#c6c6c6]" />
      <button aria-label="Zoom region">
        <Svg w={44} h={42}>
          <rect x="3" y="2" width="28" height="26" fill="#b9d2a9" stroke="#8cbc84" strokeWidth="2" />
          <circle cx="31" cy="28" r="9" fill="#f4f4f4" stroke="#b0b0b0" strokeWidth="3" />
          <path d="M37 34L43 40" stroke="#a0a0a0" strokeWidth="4" />
        </Svg>
      </button>
      <Caret color="#999" w={12} h={7} />
      <button aria-label="Customize" className="self-end">
        <Svg w={20} h={20}>
          <circle cx="10" cy="10" r="8" fill="none" stroke="#bdbdbd" strokeWidth="4" />
          <path d="M5 8H15M5 12H15" stroke="#bdbdbd" strokeWidth="2" />
        </Svg>
      </button>
    </div>
  );
}

const viewControls: { name: string; icon: ReactNode }[] = [
  {
    name: 'Detail level',
    icon: (
      <>
        <rect x="1" y="4" width="38" height="33" fill="#f5f5f5" stroke="#555" strokeWidth="2" />
        <path d="M2 9H38M2 18H38M2 27H38" stroke="#777" strokeWidth="5" strokeDasharray="5 5" />
        <path d="M7 14H38M7 23H38M7 32H38" stroke="#777" strokeWidth="4" strokeDasharray="5 5" />
      </>
    ),
  },
  {
    name: 'Visual style',
    icon: (
      <>
        <path d="M2 14L12 4H38V26L29 38H2Z" fill="#7dbbe8" stroke="#2f6fa8" strokeWidth="2" />
        <path d="M2 14H29L38 4M29 14V38" fill="none" stroke="#2f6fa8" strokeWidth="2" />
      </>
    ),
  },
  {
    name: 'Crop view off',
    icon: (
      <>
        <rect x="9" y="10" width="22" height="18" fill="#a9cdea" />
        <path d="M8 38V9H38M2 16H8M31 3V38M2 31H24" fill="none" stroke="#4b6f96" strokeWidth="4" />
        <path d="M18 18L38 38M38 18L18 38" stroke="#d33a2c" strokeWidth="6" />
      </>
    ),
  },
  {
    name: 'Show crop region',
    icon: (
      <>
        <rect x="9" y="10" width="22" height="18" fill="#a9cdea" />
        <path d="M8 38V9H38M2 16H8M31 3V38M2 31H24" fill="none" stroke="#4b6f96" strokeWidth="4" />
        <circle cx="30" cy="14" r="9" fill="#bcdcf2" stroke="#3d78ae" strokeWidth="2" />
        <path d="M12 26L24 22V30Z" fill="#d33a2c" />
      </>
    ),
  },
  {
    name: 'Temporary hide',
    icon: (
      <>
        <circle cx="14" cy="28" r="8" fill="#c5dbe6" stroke="#51606c" strokeWidth="3" />
        <circle cx="33" cy="22" r="6" fill="#c5dbe6" stroke="#51606c" strokeWidth="3" />
        <path d="M7 24L2 10L10 14M21 26L27 22M37 16L34 6L26 8" fill="none" stroke="#51606c" strokeWidth="3" />
      </>
    ),
  },
  {
    name: 'Reveal constraints',
    icon: (
      <>
        <path d="M3 2V18M37 2V18M3 10H37" fill="none" stroke="#555" strokeWidth="3" />
        <path d="M3 20V38M4 34H22" fill="none" stroke="#555" strokeWidth="3" strokeDasharray="4 3" />
        <rect x="23" y="24" width="15" height="13" fill="#777" />
        <path d="M26 24V19H35V24" fill="none" stroke="#777" strokeWidth="3" />
      </>
    ),
  },
  {
    name: 'Preview visibility',
    icon: (
      <>
        <rect x="1" y="5" width="37" height="20" fill="#e6e6e6" stroke="#666" strokeWidth="2" />
        <path d="M2 31H24M2 37H24" stroke="#777" strokeWidth="3" />
        <circle cx="32" cy="17" r="8" fill="#bcdcf2" stroke="#4f8ec4" strokeWidth="2" />
        <path d="M28 28H36V36H28Z" fill="#8db8dc" />
      </>
    ),
  },
];

function Workspace() {
  return (
    <main className="flex min-w-0 flex-1 flex-col">
      <div className="flex h-[55px] shrink-0 items-end justify-between overflow-hidden bg-[#cbcbcb]">
        <div className="flex" role="tablist">
          <button role="tab" className="flex h-[50px] w-[320px] items-center pl-3 text-[#a0a0a0]">
            <Svg w={40} h={38}>
              <path d="M3 12L14 3L33 4L38 14L26 20L14 16V36L3 30Z" fill="#e8eaed" stroke="#878b92" strokeWidth="2.5" />
              <path d="M26 20L38 14V29L26 36L14 34V16Z" fill="#c7cad0" stroke="#878b92" strokeWidth="2.5" />
            </Svg>
            <span className="pl-5">Ansicht (1)</span>
          </button>
          <div className="flex h-[50px] w-[320px] items-center justify-between bg-white pr-3.5 pl-3">
            <button role="tab" aria-selected="true" className="flex items-center text-[#c8c8c8]">
              <Svg w={42} h={38}>
                <path d="M2 3H26V16H17V33H2Z" fill="#e6e9ee" stroke="#414852" strokeWidth="3" />
                <path d="M26 6H37V16H40V35H17V31" fill="#f3f4f7" stroke="#414852" strokeWidth="3" />
                <path d="M26 16H38M17 18V34" stroke="#414852" strokeWidth="2" strokeDasharray="5 3" />
              </Svg>
              <span className="pl-[17px] font-bold">Ref.-Ebene</span>
            </button>
            <button aria-label="Close tab">
              <Svg w={24} h={24}>
                <path d="M2 1L22 23M22 1L2 23" stroke="#333" strokeWidth="4" />
              </Svg>
            </button>
          </div>
        </div>
        <Svg w={8} h={38}>
          <path d="M0 6H8" stroke="#333" strokeWidth="3" />
          <path d="M0 12H8V20Z" fill="#333" />
        </Svg>
      </div>

      <div className="flex min-h-0 flex-1">
        <div className="relative min-w-0 flex-1 overflow-hidden bg-white">
          <Drawing />
          <NavBar />
        </div>
        <div className="mt-1 flex w-5 flex-col justify-between overflow-hidden bg-[#f0f0f0] pl-[9px]">
          <button className="pt-3.5" aria-label="Scroll up"><Arrow dir="up" /></button>
          <div className="-ml-[9px] h-[43px] w-5 bg-[#cbcbcb]" />
          <button className="pb-3.5" aria-label="Scroll down"><Arrow dir="down" /></button>
        </div>
      </div>

      <div className="flex h-[35px] shrink-0 items-center justify-between overflow-hidden bg-[#f0f0f0] pr-8">
        <div className="flex items-center gap-[13px] pl-[71px]">
          <span className="w-[119px] pt-1 leading-[38px]">1 : 10</span>
          {viewControls.map((v) => (
            <button key={v.name} aria-label={v.name}>
              <Svg w={40} h={38} className="pt-1">{v.icon}</Svg>
            </button>
          ))}
          <button className="pl-[6px]" aria-label="Scroll left"><Arrow dir="left" /></button>
        </div>
        <div className="h-full flex-1 pl-[1160px]"><div className="h-full w-[43px] bg-[#cbcbcb]" /></div>
        <button aria-label="Scroll right"><Arrow dir="right" /></button>
      </div>
    </main>
  );
}

/* ---------- family types dialog ---------- */

type Param = { name: string; value: string; formula?: string; lock?: boolean; muted?: boolean };

const constraints: Param[] = [
  { name: 'Durchgangsbreite', value: '860.0', formula: 'if(Größenber', lock: true, muted: true },
  { name: 'Durchgangshöhe', value: '2175.0', formula: 'if(Größenber', lock: true, muted: true },
  { name: 'Fußbodenaufbau (default)', value: '180.0', lock: true },
  { name: 'Einbautiefe (default)', value: '0.0', lock: false },
  { name: 'Wandaufbau Aussen (default)', value: '160.0', lock: false },
  { name: 'Wandaufbau Innen (default)', value: '283.4', lock: false },
  { name: 'Winkel Öffnungsbogen (default)', value: '71.15°', lock: false },
];

const construction: Param[] = [
  { name: 'Friesbreite', value: '200.0', lock: true },
  { name: 'Function', value: 'Exterior' },
  { name: 'Glasdicke', value: '44.0', lock: false },
  { name: 'Leibungsschräge (default)', value: '160.0', lock: false },
  { name: 'Rahmenbreite', value: '75.0', lock: true },
  { name: 'Rahmentiefe', value: '90.0', lock: true },
  { name: 'Wall Closure', value: 'By host' },
  { name: 'Construction Type', value: '' },
];

const typeNames = ['DL - 1000 x 2175', 'DL - 900 x 2175', 'ML - 1010 x 2250', 'ML - 1135 x 2250'];

function Page({ muted = false }: { muted?: boolean }) {
  return (
    <path
      d="M6 4H25L38 17V39H6Z M25 4V17H38"
      fill="#edeef1"
      stroke={muted ? '#a3a3a3' : '#595e66'}
      strokeWidth="3"
    />
  );
}

function Burst() {
  return (
    <>
      <rect width="19" height="18" fill="#f0f0f0" />
      <path d="M9 0V18M0 9H18M2 2L16 16M16 2L2 16" stroke="#e8591c" strokeWidth="3" />
      <circle cx="9" cy="9" r="4" fill="#ffc83c" />
    </>
  );
}

function RowsIcon({ up }: { up: boolean }) {
  return (
    <Svg w={40} h={40}>
      <path
        d={up ? 'M10 3L19 15H14V35H6V15H1Z' : 'M10 36L19 24H14V4H6V24H1Z'}
        fill="#999"
        stroke="#d9b8ec"
        strokeWidth="2"
      />
      <path d="M25 2H39V17H25ZM25 20H39V37H25Z" fill="#c4e1f5" stroke="#5a87c8" strokeWidth="2" />
    </Svg>
  );
}

function SortIcon({ up }: { up: boolean }) {
  return (
    <Svg w={38} h={42}>
      <g fontFamily="'Open Sans', sans-serif" fontWeight="800" fontSize="22">
        <text x="1" y="18" fill={up ? '#3a5580' : '#5f86b5'}>A</text>
        <text x="3" y="40" fill={up ? '#5f86b5' : '#3a5580'}>Z</text>
      </g>
      <path d={up ? 'M29 37V10' : 'M29 5V30'} stroke="#2c4a73" strokeWidth="4" />
      <path d={up ? 'M22 15L29 3L36 15Z' : 'M22 26L29 38L36 26Z'} fill="#2c4a73" />
    </Svg>
  );
}

const paramTools: { name: string; icon: ReactNode }[] = [
  {
    name: 'Edit parameter',
    icon: (
      <Svg w={40} h={40}>
        <path d="M2 38L5 27L31 2L38 8L12 34Z" fill="#f0f0f0" stroke="#999" strokeWidth="2" />
        <path d="M9 30L29 10" stroke="#b98d3c" strokeWidth="5" />
        <path d="M28 5L35 12" stroke="#999" strokeWidth="3" />
      </Svg>
    ),
  },
  { name: 'New parameter', icon: <Svg w={40} h={40}><Page /><Burst /></Svg> },
  {
    name: 'Delete parameter',
    icon: (
      <Svg w={40} h={40}>
        <Page muted />
        <path d="M1 1L17 16M17 1L1 16" stroke="#a58f8f" strokeWidth="5" strokeDasharray="3 1" />
      </Svg>
    ),
  },
  {
    name: 'Duplicate parameter',
    icon: (
      <Svg w={40} h={40}>
        <path d="M8 35H2V2H22" fill="none" stroke="#a3a3a3" strokeWidth="2.5" />
        <path d="M10 5H28L39 16V38H10ZM28 5V16H39" fill="#edeef1" stroke="#a3a3a3" strokeWidth="2.5" />
      </Svg>
    ),
  },
  { name: 'Move up', icon: <RowsIcon up /> },
  { name: 'Move down', icon: <RowsIcon up={false} /> },
];

function Category({ children }: { children: string }) {
  return (
    <tr>
      <th colSpan={4} className="h-[58px] border-t-3 border-white bg-[#99b3d1] p-0 text-left">
        <div className="flex h-[55px] justify-between pt-1.5 pl-1 leading-[44px]">
          {children}
          <span className="pr-1.5"><Collapse /></span>
        </div>
      </th>
    </tr>
  );
}

const cell = 'h-[50px] border-r border-b border-dotted border-[#666] p-0 align-top whitespace-nowrap overflow-hidden';

function ParamRow({ p }: { p: Param }) {
  return (
    <tr className="leading-[44px]">
      <td className={`${cell} pl-1 ${p.muted ? 'text-[#7a7a7a]' : ''}`}>{p.name}</td>
      <td className={`${cell} pl-1 ${p.muted ? 'text-[#7a7a7a]' : ''}`}>{p.value}</td>
      <td className={cell}>
        <div className="flex h-[44px] items-center gap-[3px] pl-[3px]">
          <span className="mt-1 h-2.5 w-1.5 border-y-2 border-black" />
          {p.formula}
        </div>
      </td>
      <td className={cell}>
        {p.lock !== undefined && (
          <div className="pt-[3px] pl-[3px]"><CheckBox checked={p.lock} label={`Lock ${p.name}`} /></div>
        )}
      </td>
    </tr>
  );
}

const dialogButton = 'h-[60px] border border-[#adadad] bg-[#e1e1e1] whitespace-nowrap';

function FamilyTypesDialog() {
  return (
    <div
      role="dialog"
      aria-label="Family Types"
      className="absolute top-[349px] right-[159px] w-[1319px] border-2 border-[#6a6a6a] bg-[#f0f0f0] shadow-[0_10px_36px_rgba(0,0,0,0.4)]"
    >
      <div className="flex h-[70px] items-center justify-between bg-white pr-8 pl-4">
        <h2>Family Types</h2>
        <button aria-label="Close">
          <Svg w={22} h={22}>
            <path d="M1 1L21 21M21 1L1 21" stroke="#000" strokeWidth="2" />
          </Svg>
        </button>
      </div>

      <div className="pt-[33px] pr-[25px] pb-[37px] pl-[26px]">
        <div className="relative flex h-[50px] items-start">
          <label htmlFor="type-name" className="w-[177px] pt-1 leading-[42px]">Type name:</label>
          <div className="grid flex-1 items-center">
            <select
              id="type-name"
              defaultValue="ML - 1010 x 2250"
              className="col-start-1 row-start-1 h-[42px] appearance-none border border-[#00599c] bg-[#cce4f7] pl-1 text-[27px]"
            >
              {typeNames.map((t) => (
                <option key={t}>{t}</option>
              ))}
            </select>
            <svg width="18" height="12" className="pointer-events-none col-start-1 row-start-1 mr-3 justify-self-end" aria-hidden="true">
              <path d="M1 1L9 9L17 1" fill="none" stroke="#444" strokeWidth="1.5" />
            </svg>
          </div>
          <div className="flex gap-[37px] pt-[9px] pr-[13px] pl-[25px]">
            <button aria-label="New type"><Svg w={40} h={41}><Page /><Burst /></Svg></button>
            <button aria-label="Rename type">
              <Svg w={40} h={41}>
                <rect x="1" y="4" width="38" height="32" fill="#f4f6f8" stroke="#595e66" strokeWidth="3" />
                <rect x="5" y="8" width="21" height="24" fill="#9fd0f0" />
                <text x="6" y="30" fontFamily="'Open Sans', sans-serif" fontWeight="800" fontSize="24" fill="#1d62a8">A</text>
                <path d="M26 10H34M26 30H34M30 10V30" stroke="#444" strokeWidth="2" />
              </Svg>
            </button>
            <button aria-label="Delete type">
              <Svg w={40} h={41}>
                <Page />
                <rect width="19" height="18" fill="#f0f0f0" />
                <path d="M2 2L18 17M18 2L2 17" stroke="#cf2f2a" strokeWidth="6" />
              </Svg>
            </button>
          </div>
          <ul
            role="listbox"
            aria-label="Type names"
            className="absolute top-[41px] left-[177px] z-10 w-[856px] border border-[#0078d7] bg-white text-[27px] leading-[33px] shadow-[3px_3px_4px_rgba(0,0,0,0.4)]"
          >
            {typeNames.map((t) => (
              <li
                key={t}
                role="option"
                aria-selected={t === 'ML - 1010 x 2250'}
                className="pl-[3px] aria-selected:bg-[#0078d7] aria-selected:text-white"
              >
                {t}
              </li>
            ))}
          </ul>
          <svg width="350" height="88" className="pointer-events-none absolute top-[73px] left-[105px] z-20" aria-hidden="true">
            <ellipse cx="176" cy="46" rx="169" ry="38" fill="none" stroke="#0003" strokeWidth="4" />
            <ellipse cx="174" cy="43" rx="169" ry="38" fill="none" stroke="#f00000" strokeWidth="2" />
          </svg>
          <svg width="28" height="38" className="pointer-events-none absolute top-[129px] left-[487px] z-20" aria-hidden="true">
            <path d="M1 1V32L8 26L14 37L19 34L14 24H25Z" fill="#fff" stroke="#000" strokeWidth="1.5" />
          </svg>
        </div>

        <div className="mt-[33px] flex h-[50px] items-center border border-[#7a7a7a] bg-white pr-1">
          <input
            type="search"
            aria-label="Search parameters"
            placeholder="Search parameters"
            className="h-full min-w-0 flex-1 pb-2.5 pl-1 text-[26px] placeholder:text-[#666]"
          />
          <button aria-label="Search">
            <Svg w={44} h={44}>
              <circle cx="17" cy="18" r="13" fill="#d8eef0" stroke="#555" strokeWidth="3" />
              <path d="M26 27L40 40" stroke="#3a3a3a" strokeWidth="7" />
            </Svg>
          </button>
        </div>

        <div className="mt-6 flex h-[914px] border-t border-r border-b border-l-2 border-t-[#7a7a7a] border-r-[#ddd] border-b-[#ddd] border-l-[#6a6a6a]">
          <div className="flex-1 overflow-hidden bg-white">
            <table className="w-full table-fixed border-separate border-spacing-0">
              <colgroup>
                <col className="w-[457px]" />
                <col className="w-[457px]" />
                <col className="w-[190px]" />
                <col />
              </colgroup>
              <thead>
                <tr className="bg-[#f0f0f0]">
                  {['Parameter', 'Value', 'Formula', 'Lock'].map((h) => (
                    <th key={h} className="h-[59px] border-r border-b border-black p-0 pt-1 font-normal">{h}</th>
                  ))}
                </tr>
              </thead>
              <tbody>
                <Category>Constraints</Category>
                {constraints.map((p) => <ParamRow key={p.name} p={p} />)}
                <Category>Construction</Category>
                {construction.map((p) => <ParamRow key={p.name} p={p} />)}
              </tbody>
            </table>
          </div>
          <div className="flex w-[44px] flex-col bg-[#f0f0f0] px-px">
            <button className="grid h-[44px] place-items-center" aria-label="Scroll up"><Arrow dir="up" /></button>
            <div className="min-h-0 flex-1"><div className="h-[220px] bg-[#cbcbcb]" /></div>
            <button className="grid h-[44px] place-items-center" aria-label="Scroll down"><Arrow dir="down" /></button>
          </div>
        </div>

        <div className="mt-[27px] flex h-[60px] items-center">
          <div className="flex flex-1 items-center gap-[35px] pl-3">
            {paramTools.map((t) => (
              <button key={t.name} aria-label={t.name}>{t.icon}</button>
            ))}
            <div className="flex gap-[37px] pl-[37px]">
              <button aria-label="Sort ascending"><SortIcon up={false} /></button>
              <button aria-label="Sort descending"><SortIcon up /></button>
            </div>
          </div>
          <div className="flex gap-[9px] text-[26px]">
            <button className={`${dialogButton} w-[291px]`}>Export Grid (In-House)</button>
            <button className={`${dialogButton} w-[313px]`}>Manage Lookup Tables</button>
          </div>
        </div>

        <div className="mt-[31px] flex h-[60px] items-start justify-between text-[26px]">
          <a href="#family-types" className="leading-[32px] text-[#0066cc] underline">How do I manage family types?</a>
          <div className="flex gap-[17px]">
            <button className="h-[60px] w-[193px] border-2 border-[#0078d7] bg-[#e1e1e1]">OK</button>
            <button className={`${dialogButton} w-[193px]`}>Cancel</button>
            <button className={`${dialogButton} w-[193px]`}>Apply</button>
          </div>
        </div>
      </div>
      <svg width="20" height="20" className="absolute right-1 bottom-1" aria-hidden="true">
        <path d="M14 0H19V5H14ZM7 7H12V12H7ZM14 7H19V12H14ZM0 14H5V19H0ZM7 14H12V19H7ZM14 14H19V19H14Z" fill="#bcbcbc" />
      </svg>
    </div>
  );
}

export default function App() {
  return (
    <div className="relative flex h-screen w-full flex-col overflow-hidden border-l-[3px] border-[#cbcbcb] bg-[#eee] font-['Open_Sans','Noto_Sans',sans-serif] text-[28px] leading-[38px] text-black">
      <Ribbon />
      <div className="h-[65px] shrink-0 bg-[#eee]" />
      <div className="flex min-h-0 flex-1">
        <aside className="flex w-[792px] shrink-0 flex-col border-t-2 border-r-[5px] border-[#cbcbcb]">
          <PropertiesPalette />
          <ProjectBrowser />
        </aside>
        <Workspace />
      </div>
      <FamilyTypesDialog />
      <div className="pointer-events-none absolute right-[137px] bottom-[20px] text-[#a6a6a6]/75">
        <p className="text-[48px] leading-[64px]">Activate Windows</p>
        <p className="text-[36px] leading-[48px]">Go to Settings to activate Windows.</p>
      </div>
    </div>
  );
}
